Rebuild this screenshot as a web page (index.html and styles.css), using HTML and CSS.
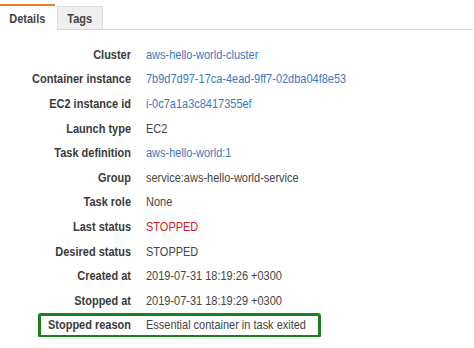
FILE: index.html
```html
<!DOCTYPE html>
<html>
<head>
<meta charset="utf-8">
<link rel="stylesheet" href="styles.css">
</head>
<body>
<div class="tabs">
  <div class="tab active"><span class="tab-text">Details</span></div>
  <div class="tab"><span class="tab-text">Tags</span></div>
  <div class="tab-fill"></div>
</div>
<div class="details">
  <div class="row"><div class="label">Cluster</div><div class="value link">aws-hello-world-cluster</div></div>
  <div class="row"><div class="label">Container instance</div><div class="value link">7b9d7d97-17ca-4ead-9ff7-02dba04f8e53</div></div>
  <div class="row"><div class="label">EC2 instance id</div><div class="value link">i-0c7a1a3c8417355ef</div></div>
  <div class="row"><div class="label">Launch type</div><div class="value">EC2</div></div>
  <div class="row"><div class="label">Task definition</div><div class="value link">aws-hello-world:1</div></div>
  <div class="row"><div class="label">Group</div><div class="value">service:aws-hello-world-service</div></div>
  <div class="row"><div class="label">Task role</div><div class="value">None</div></div>
  <div class="row"><div class="label">Last status</div><div class="value stopped">STOPPED</div></div>
  <div class="row"><div class="label">Desired status</div><div class="value">STOPPED</div></div>
  <div class="row"><div class="label">Created at</div><div class="value">2019-07-31 18:19:26 +0300</div></div>
  <div class="row"><div class="label">Stopped at</div><div class="value">2019-07-31 18:19:29 +0300</div></div>
  <div class="row highlight"><div class="label">Stopped reason</div><div class="value">Essential container in task exited</div></div>
</div>
</body>
</html>
```
FILE: styles.css
```css
html, body {
  margin: 0;
  padding: 0;
  background: #fff;
}
body {
  font-family: "Liberation Sans", Arial, sans-serif;
  font-size: 13px;
  color: #444;
}
.tabs {
  display: flex;
  align-items: flex-end;
  padding-top: 4px;
  height: 26px;
  width: 473px;
}
.tab {
  box-sizing: border-box;
  font-weight: bold;
  color: #444;
  display: flex;
  align-items: center;
  justify-content: center;
}
.tab-text {
  display: inline-block;
  transform: scaleX(0.845);
}
.tab.active {
  width: 55px;
  height: 26px;
  border-top: 2px solid #e5832a;
  background: #fff;
}
.tab:not(.active) {
  margin-left: 2px;
  width: 46px;
  height: 24px;
  background: #efefef;
  border: 1px solid #ddd;
  border-bottom: 1px solid #d6d6d6;
}
.tab-fill {
  flex: 1;
  height: 26px;
  box-sizing: border-box;
  border-bottom: 1px solid #d6d6d6;
}
.details {
  padding-top: 12px;
  display: flex;
  flex-direction: column;
}
.row {
  position: relative;
  display: flex;
  align-items: center;
  height: 24.6px;
}
.label {
  width: 131px;
  text-align: right;
  font-weight: bold;
  color: #3a3a3a;
  flex-shrink: 0;
  white-space: nowrap;
  transform: scaleX(0.845);
  transform-origin: right center;
}
.value {
  margin-left: 15px;
  white-space: nowrap;
  transform: scaleX(0.845);
  transform-origin: left center;
}
.link {
  color: #3b78c0;
}
.stopped {
  color: #d0202e;
}
.highlight::before {
  content: "";
  position: absolute;
  left: 38px;
  width: 283px;
  top: 0;
  height: 25px;
  box-sizing: border-box;
  border: 3px solid #17801f;
  border-radius: 3px;
}
```
